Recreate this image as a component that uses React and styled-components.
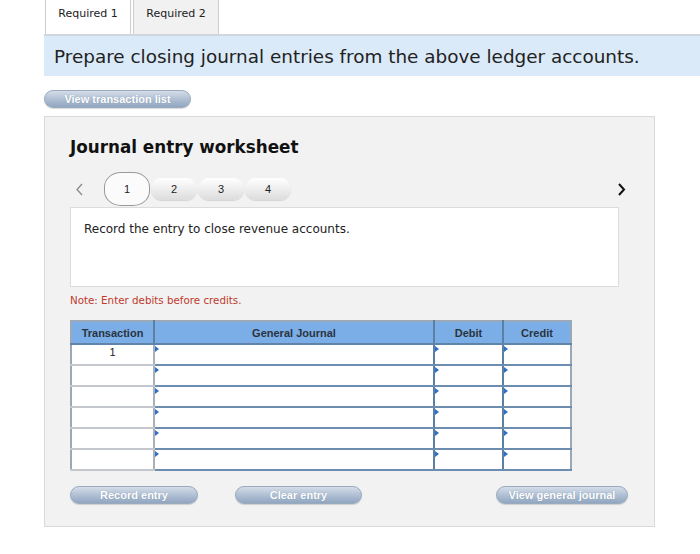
import React from "react";
import styled, { createGlobalStyle } from "styled-components";

const Global = createGlobalStyle`
  html, body { margin: 0; padding: 0; background: #fff; }
  body { font-family: "DejaVu Sans", Verdana, sans-serif; color: #222; }
`;

const Page = styled.div`
  width: 700px;
  height: 554px;
  padding-left: 44px;
  box-sizing: border-box;
  overflow: hidden;
`;

const Tabs = styled.div`
  display: flex;
  height: 34px;
  gap: 2px;
`;

const Tab = styled.div`
  width: 86px;
  box-sizing: border-box;
  display: flex;
  align-items: center;
  justify-content: center;
  font-size: 11px;
  color: #222;
  background: ${(p) => (p.$active ? "#fff" : "#f1f1f1")};
  border-left: 1px solid #cfcfcf;
  border-right: 1px solid #cfcfcf;
  padding-bottom: 7px;
  margin-left: ${(p) => (p.$active ? "1px" : "0")};
`;

const Banner = styled.div`
  height: 42px;
  box-sizing: border-box;
  background: #dbeaf8;
  border-top: 2px solid #cfd6dd;
  display: flex;
  align-items: center;
  padding-left: 10px;
  font-size: 18.4px;
  color: #222;
  white-space: nowrap;
`;

const PillButton = styled.button`
  width: ${(p) => p.$w}px;
  height: 18px;
  border-radius: 9px;
  border: 1px solid #9aaabd;
  background: linear-gradient(#d4dde8 0%, #b4c3d6 45%, #91a6c0 100%);
  color: #fff;
  font-family: "Liberation Sans", Arial, sans-serif;
  font-weight: bold;
  font-size: 11px;
  text-shadow: 0 0 1px rgba(80, 100, 130, 0.5);
  padding: 0;
  cursor: pointer;
  box-shadow: 0 1px 1px rgba(0, 0, 0, 0.15);
`;

const ViewRow = styled.div`
  margin-top: 12px;
  height: 18px;
`;

const Panel = styled.div`
  margin-top: 10px;
  width: 611px;
  height: 411px;
  box-sizing: border-box;
  background: #f2f2f2;
  border: 1px solid #d9d9d9;
  padding: 19px 0 0 25px;
`;

const Title = styled.h2`
  margin: 0;
  font-size: 16.8px;
  font-weight: bold;
  color: #111;
  height: 22px;
  line-height: 22px;
`;

const NavRow = styled.div`
  margin-top: 13px;
  width: 556px;
  height: 36px;
  display: flex;
  align-items: flex-end;
`;

const Arrow = styled.div`
  width: ${(p) => (p.$right ? 14 : 34)}px;
  height: 36px;
  display: flex;
  align-items: center;
  padding-left: 5px;
  box-sizing: border-box;
  color: ${(p) => p.$color};
  margin-left: ${(p) => (p.$right ? "auto" : "0")};
`;

const StepTabs = styled.div`
  display: flex;
  align-items: flex-end;
  gap: 1px;
  margin-bottom: 7px;
`;

const Step = styled.div`
  width: 46px;
  height: ${(p) => (p.$active ? 34 : 22)}px;
  box-sizing: border-box;
  border-radius: ${(p) => (p.$active ? "17px / 15px" : "11px")};
  background: ${(p) =>
    p.$active ? "#fbfbfb" : "linear-gradient(#ffffff 0%, #ececec 55%, #dcdcdc 100%)"};
  border: ${(p) => (p.$active ? "1px solid #9a9a9a" : "none")};
  box-shadow: ${(p) => (p.$active ? "none" : "0 1px 1px rgba(0,0,0,0.12)")};
  display: flex;
  align-items: center;
  justify-content: center;
  font-family: "Liberation Sans", Arial, sans-serif;
  font-size: 11px;
  color: #222;
  margin-bottom: ${(p) => (p.$active ? "-6px" : "0")};
  position: relative;
  z-index: ${(p) => (p.$active ? 2 : 1)};
`;

const Prompt = styled.div`
  width: 549px;
  height: 80px;
  box-sizing: border-box;
  background: #fff;
  border: 1px solid #dcdcdc;
  padding: 14px 0 0 13px;
  font-size: 12px;
  color: #222;
`;

const Note = styled.div`
  margin-top: 7px;
  font-size: 10.3px;
  color: #c0392b;
  height: 13px;
`;

const Table = styled.table`
  margin-top: 13px;
  border-collapse: collapse;
  width: 500px;
  table-layout: fixed;
  font-family: "Liberation Sans", Arial, sans-serif;
  border: 2px solid #9aa8b8;
`;

const Th = styled.th`
  height: 21px;
  background: #7baee6;
  color: #2a3440;
  font-size: 11px;
  font-weight: bold;
  border-right: 2px solid #5c7fa4;
  border-bottom: 2px solid #5f83a9;
  padding: 0;
  &:last-child { border-right: none; }
`;

const Col = styled.col`
  width: ${(p) => p.$w}px;
`;

const Td = styled.td`
  height: 19px;
  padding: 0;
  background: #fff;
  font-size: 11px;
  color: #222;
  text-align: center;
  vertical-align: top;
  line-height: 15px;
  position: relative;
  border-right: 2px solid ${(p) => (p.$plain ? "#a9b0b8" : "#5c7fa4")};
  border-bottom: 2px solid ${(p) => (p.$plain ? "#c4c8cc" : "#6d8db0")};
  &:last-child { border-right: none; }
`;

const Marker = styled.span`
  position: absolute;
  left: 0;
  top: 1px;
  width: 0;
  height: 0;
  border-top: 3px solid transparent;
  border-bottom: 3px solid transparent;
  border-left: 4px solid #2f6fc8;
`;

const Actions = styled.div`
  margin-top: 15px;
  width: 558px;
  display: flex;
  align-items: center;
`;

const Spacer = styled.div`
  width: ${(p) => p.$w}px;
  flex: ${(p) => (p.$grow ? 1 : "none")};
`;

function Chevron({ dir }) {
  const d = dir === "left" ? "M7 1 L2 6.5 L7 12" : "M2 1 L7 6.5 L2 12";
  return (
    <svg width="9" height="13" viewBox="0 0 9 13">
      <path d={d} fill="none" stroke="currentColor" strokeWidth={dir === "left" ? 1.3 : 2} />
    </svg>
  );
}

const rows = [1, 2, 3, 4, 5, 6];

export default function App() {
  return (
    <>
      <Global />
      <Page>
        <Tabs>
          <Tab $active>Required 1</Tab>
          <Tab>Required 2</Tab>
        </Tabs>
        <Banner>Prepare closing journal entries from the above ledger accounts.</Banner>
        <ViewRow>
          <PillButton $w={147}>View transaction list</PillButton>
        </ViewRow>
        <Panel>
          <Title>Journal entry worksheet</Title>
          <NavRow>
            <Arrow $color="#8a8a8a">
              <Chevron dir="left" />
            </Arrow>
            <StepTabs>
              <Step $active>1</Step>
              <Step>2</Step>
              <Step>3</Step>
              <Step>4</Step>
            </StepTabs>
            <Arrow $right $color="#111">
              <Chevron dir="right" />
            </Arrow>
          </NavRow>
          <Prompt>Record the entry to close revenue accounts.</Prompt>
          <Note>Note: Enter debits before credits.</Note>
          <Table>
            <colgroup>
              <Col $w={83} />
              <Col $w={280} />
              <Col $w={69} />
              <Col $w={68} />
            </colgroup>
            <thead>
              <tr>
                <Th>Transaction</Th>
                <Th>General Journal</Th>
                <Th>Debit</Th>
                <Th>Credit</Th>
              </tr>
            </thead>
            <tbody>
              {rows.map((r, i) => (
                <tr key={r}>
                  <Td $plain>{i === 0 ? "1" : ""}</Td>
                  <Td><Marker /></Td>
                  <Td><Marker /></Td>
                  <Td><Marker /></Td>
                </tr>
              ))}
            </tbody>
          </Table>
          <Actions>
            <PillButton $w={128}>Record entry</PillButton>
            <Spacer $w={37} />
            <PillButton $w={127}>Clear entry</PillButton>
            <Spacer $grow />
            <PillButton $w={132}>View general journal</PillButton>
          </Actions>
        </Panel>
      </Page>
    </>
  );
}
